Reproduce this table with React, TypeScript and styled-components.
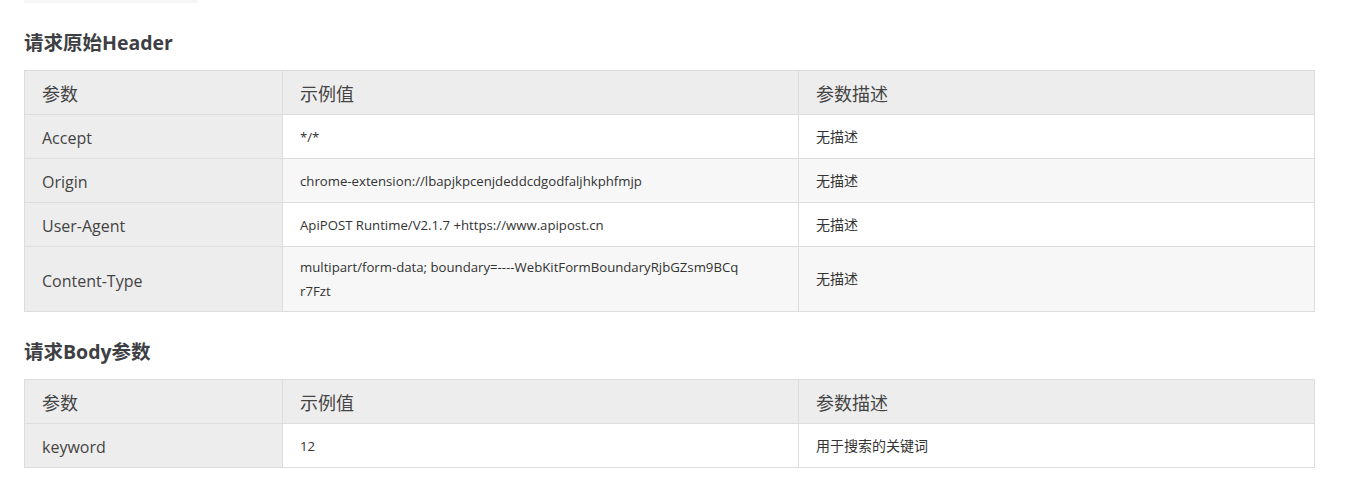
import styled, { createGlobalStyle } from "styled-components";

interface IParam {
  name: string;
  value: string;
  desc: string;
}

const headerParams: IParam[] = [
  { name: "Accept", value: "*/*", desc: "无描述" },
  {
    name: "Origin",
    value: "chrome-extension://lbapjkpcenjdeddcdgodfaljhkphfmjp",
    desc: "无描述",
  },
  {
    name: "User-Agent",
    value: "ApiPOST Runtime/V2.1.7 +https://www.apipost.cn",
    desc: "无描述",
  },
  {
    name: "Content-Type",
    value: "multipart/form-data; boundary=----WebKitFormBoundaryRjbGZsm9BCqr7Fzt",
    desc: "无描述",
  },
];

const bodyParams: IParam[] = [
  { name: "keyword", value: "12", desc: "用于搜索的关键词" },
];

function ParamTable({ rows }: { rows: IParam[] }) {
  return (
    <Table>
      <colgroup>
        <col style={{ width: 258 }} />
        <col style={{ width: 516 }} />
        <col />
      </colgroup>
      <thead>
        <tr>
          <HeadCell>参数</HeadCell>
          <HeadCell>示例值</HeadCell>
          <HeadCell>参数描述</HeadCell>
        </tr>
      </thead>
      <tbody>
        {rows.map((row, i) => (
          <Row key={row.name} $striped={i % 2 === 1}>
            <NameCell>{row.name}</NameCell>
            <ValueCell $size={13.2}>{row.value}</ValueCell>
            <ValueCell $size={14}>{row.desc}</ValueCell>
          </Row>
        ))}
      </tbody>
    </Table>
  );
}

function App() {
  return (
    <>
      <GlobalStyle />
      <Page>
        <CodeTail />
        <SectionTitle>请求原始Header</SectionTitle>
        <ParamTable rows={headerParams} />
        <SectionTitle>请求Body参数</SectionTitle>
        <ParamTable rows={bodyParams} />
      </Page>
    </>
  );
}

const GlobalStyle = createGlobalStyle`
  html, body {
    margin: 0;
    padding: 0;
    background: #fff;
  }
  body {
    font-family: "Open Sans", "Noto Sans CJK SC", sans-serif;
    color: #333;
  }
`;

const Page = styled.div`
  padding: 0 24px;
`;

const CodeTail = styled.div`
  width: 174px;
  height: 3px;
  background-color: #f6f6f6;
`;

const SectionTitle = styled.h3`
  margin: 26px 0 14px;
  font-size: 19.5px;
  line-height: 27px;
  font-weight: bold;
  color: #3d3f44;
`;

const Table = styled.table`
  width: 1291px;
  table-layout: fixed;
  border-collapse: collapse;
  border: 1px solid #dddddd;
`;

const HeadCell = styled.th`
  padding: 10px 17px 6px;
  font-size: 18px;
  line-height: 27px;
  font-weight: normal;
  text-align: left;
  color: #444;
  background-color: #ededed;
  border: 1px solid #dddddd;
`;

const Row = styled.tr<{ $striped: boolean }>`
  background-color: ${(p) => (p.$striped ? "#f7f7f7" : "#ffffff")};
`;

const NameCell = styled.td`
  padding: 10px 17px 6px;
  font-size: 16px;
  line-height: 27px;
  color: #444;
  background-color: #ededed;
  border: 1px solid #dddddd;
`;

const ValueCell = styled.td<{ $size: number }>`
  padding: 8px 56px 8px 17px;
  font-size: ${(p) => p.$size}px;
  line-height: 24px;
  color: #333;
  word-break: break-all;
  border: 1px solid #dddddd;
`;

export default App;
